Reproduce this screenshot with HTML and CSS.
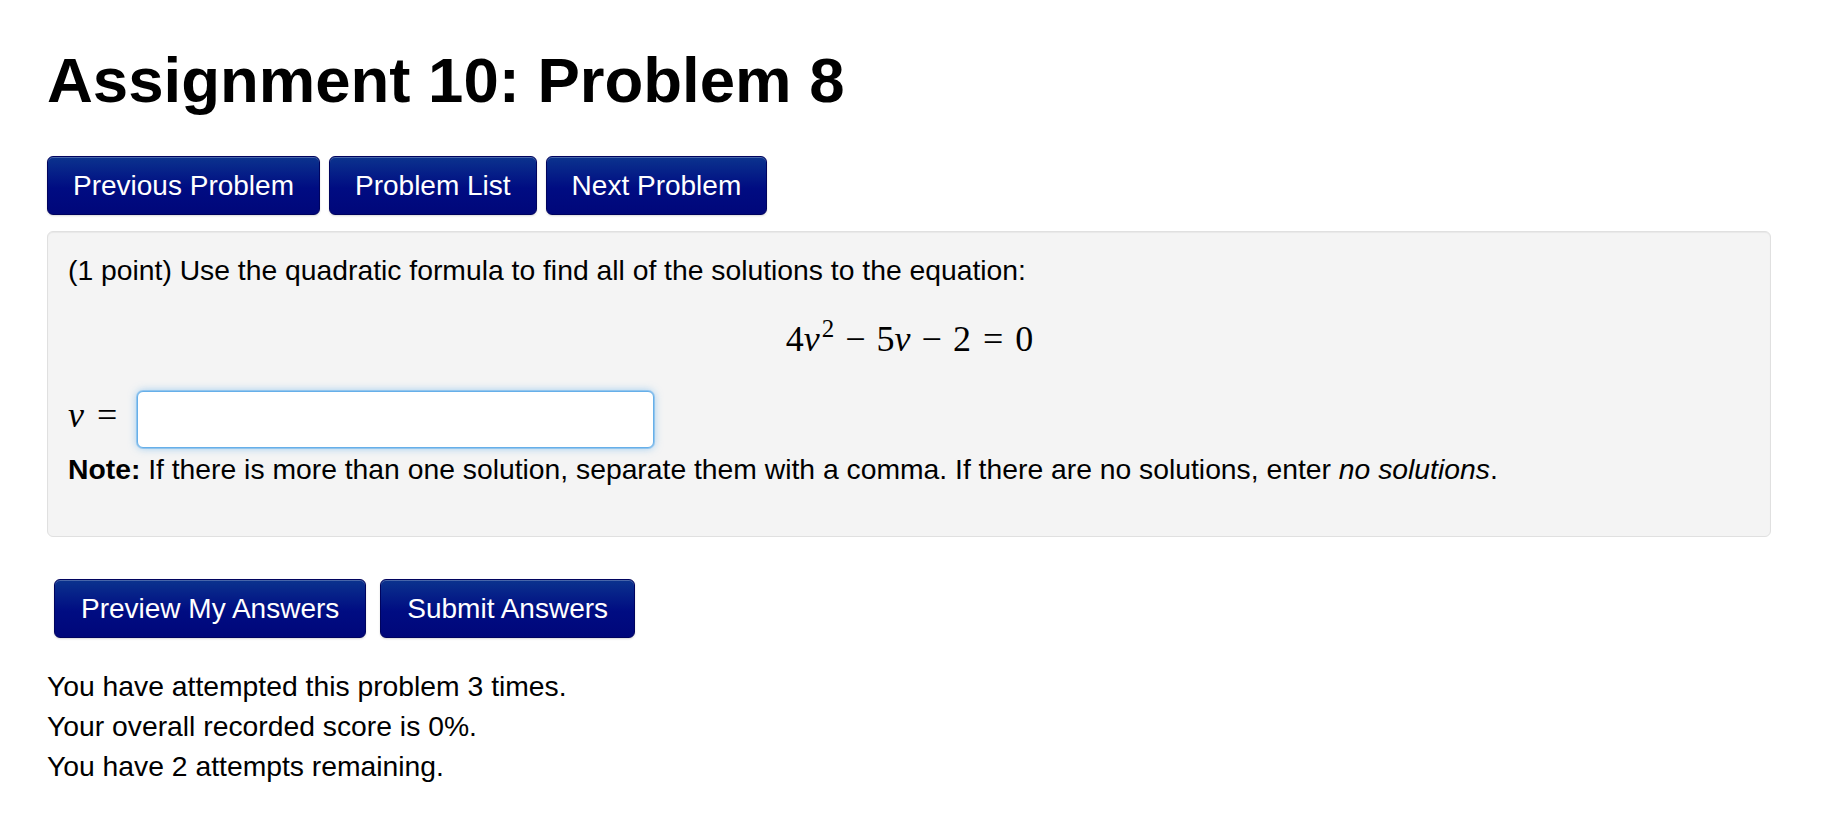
FILE: index.html
```html
<!DOCTYPE html>
<html lang="en">
<head>
<meta charset="utf-8">
<title>Assignment 10: Problem 8</title>
<link rel="stylesheet" href="styles.css">
</head>
<body>
<div class="page">
  <h1 class="title">Assignment 10: Problem 8</h1>
  <div class="nav">
    <a class="btn">Previous Problem</a>
    <a class="btn">Problem List</a>
    <a class="btn">Next Problem</a>
  </div>
  <div class="problem">
    <p class="line">(1 point) Use the quadratic formula to find all of the solutions to the equation:</p>
    <div class="equation"><span class="num">4</span><span class="var">v</span><span class="sup">2</span><span class="bin">−</span><span class="num">5</span><span class="var">v</span><span class="bin">−</span><span class="num">2</span><span class="rel">=</span><span class="num">0</span></div>
    <div class="answer-row">
      <span class="label"><span class="var">v</span><span class="rel-l">=</span></span>
      <input class="answer" type="text">
    </div>
    <p class="line"><b>Note:</b> If there is more than one solution, separate them with a comma. If there are no solutions, enter <i>no solutions</i>.</p>
  </div>
  <div class="submit-row">
    <a class="btn">Preview My Answers</a>
    <a class="btn">Submit Answers</a>
  </div>
  <div class="status">
    <div>You have attempted this problem 3 times.</div>
    <div>Your overall recorded score is 0%.</div>
    <div>You have 2 attempts remaining.</div>
  </div>
</div>
</body>
</html>
```
FILE: styles.css
```css
html, body {
  margin: 0;
  padding: 0;
  background: #fff;
}
body {
  font-family: "Liberation Sans", Arial, Helvetica, sans-serif;
  color: #000;
  font-size: 28.3px;
}
.page {
  padding-left: 47px;
  width: 1724px;
}
.title {
  margin: 44px 0 0;
  font-size: 63.5px;
  line-height: 72px;
  font-weight: bold;
}
.nav {
  margin-top: 40px;
  display: flex;
  gap: 9px;
}
.btn {
  display: inline-flex;
  align-items: center;
  height: 57px;
  padding: 0 25px;
  color: #fff;
  font-size: 28px;
  border: 1px solid #00035e;
  border-radius: 6px;
  background: linear-gradient(#0b338e, #000c82 55%, #00077a);
  box-shadow: inset 0 1px 0 rgba(255,255,255,0.25), 0 1px 2px rgba(0,0,0,0.15);
  cursor: pointer;
}
.submit-row .btn {
  padding: 0 26px;
}
.problem {
  margin-top: 16px;
  box-sizing: border-box;
  width: 1724px;
  background: #f4f4f4;
  border: 1px solid #e0e0e0;
  border-radius: 6px;
  box-shadow: inset 0 1px 1px rgba(0,0,0,0.05);
  padding: 18px 19px 45px 20px;
  display: flex;
  flex-direction: column;
}
.line {
  margin: 0;
  line-height: 40px;
}
.equation {
  margin-top: 24px;
  height: 50px;
  line-height: 50px;
  text-align: center;
  font-family: "Liberation Serif", "Times New Roman", serif;
  font-size: 36px;
}
.num {
  font-style: normal;
}
.var {
  font-style: italic;
  font-family: "Liberation Serif", "Times New Roman", serif;
}
.sup {
  font-size: 25px;
  line-height: 0;
  vertical-align: 14px;
  margin-left: 2px;
}
.bin {
  margin: 0 11px;
}
.rel {
  margin: 0 12px;
}
.answer-row {
  margin-top: 27px;
  display: flex;
  align-items: center;
  height: 57px;
}
.label {
  font-family: "Liberation Serif", "Times New Roman", serif;
  font-size: 36px;
  line-height: 40px;
  padding-bottom: 9px;
  width: 69px;
}
.rel-l {
  margin-left: 13px;
}
.answer {
  box-sizing: border-box;
  width: 517px;
  height: 57px;
  margin: 0;
  background: #fff;
  border: 1px solid #66afe9;
  border-radius: 6px;
  box-shadow: 0 0 0 1px rgba(102,175,233,0.55), 0 0 8px rgba(82,168,236,0.6);
  outline: none;
  font-size: 28px;
}
.problem .line:last-child {
  margin-top: 1px;
  margin-bottom: 2px;
}
.submit-row {
  margin-top: 42px;
  margin-left: 7px;
  display: flex;
  gap: 14px;
}
.status {
  margin-top: 28px;
  line-height: 40px;
}
```
